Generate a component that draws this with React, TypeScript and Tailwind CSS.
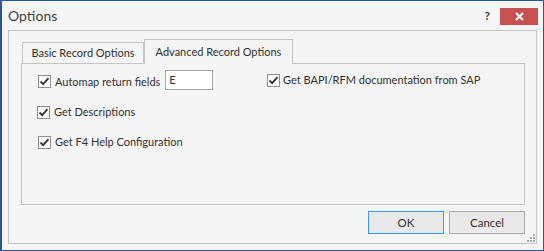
import React from "react";

function Check({ checked = true }: { checked?: boolean }) {
  return (
    <span className="flex h-[13px] w-[13px] shrink-0 items-center justify-center border border-[#8f8f8f] bg-white">
      {checked && (
        <svg width="11" height="11" viewBox="0 0 11 11">
          <path d="M1.5 5.5 L4.2 8.2 L9.5 2.2" fill="none" stroke="#333" strokeWidth="1.8" />
        </svg>
      )}
    </span>
  );
}

function Btn({ children, focused = false }: { children: React.ReactNode; focused?: boolean }) {
  return (
    <div
      className={
        focused
          ? "flex h-[23px] w-[76px] items-center justify-center border border-[#3399ff] bg-[#e9e9e9] text-[11.5px] text-[#333]"
          : "flex h-[23px] w-[76px] items-center justify-center border border-[#acacac] bg-[#e9e9e9] text-[11.5px] text-[#333]"
      }
    >
      {children}
    </div>
  );
}

export default function App() {
  return (
    <div
      className="flex h-[251px] w-[544px] flex-col border border-l-2 border-[#2b579a] bg-[#f5f5f5] text-[#333]"
      style={{ fontFamily: 'Lato, "Open Sans", sans-serif' }}
    >
      <div className="flex h-[29px] shrink-0 items-start">
        <div className="ml-[6px] mt-[5px] text-[14px] leading-[20px] text-[#444]">Options</div>
        <div className="ml-auto mt-[7px] flex items-start">
          <div className="mr-[10px] text-[12px] font-bold leading-[16px] text-[#444]">?</div>
          <div className="mr-[5px] flex h-[17px] w-[38px] items-center justify-center bg-[#c75050]">
            <svg width="9" height="9" viewBox="0 0 9 9">
              <path d="M1 1 L8 8 M8 1 L1 8" stroke="#fff" strokeWidth="2" />
            </svg>
          </div>
        </div>
      </div>
      <div className="relative mb-[6px] ml-[6px] mr-[6px] flex h-[214px] flex-col border border-[#c6c6c6]">
        <div className="ml-[12px] mr-[11px] mt-[8px] flex flex-col">
          <div className="flex h-[24px] items-end">
            <div className="relative ml-[1px] flex h-[21px] w-[122px] items-center justify-center border border-b-0 border-[#c6c6c6] text-[11px]">
              Basic Record Options
            </div>
            <div className="relative -mb-[1px] flex h-[25px] w-[149px] items-center justify-center border border-b-0 border-[#c6c6c6] bg-[#f5f5f5] text-[11px]">
              Advanced Record Options
            </div>
          </div>
          <div className="flex h-[142px] border border-[#c6c6c6] text-[11px]">
            <div className="ml-[16px] mt-[6px] flex flex-col">
              <div className="flex h-[20px] items-start">
                <span className="mt-[5px]">
                  <Check />
                </span>
                <span className="ml-[4px] mt-[4px] leading-[16px]">Automap return fields</span>
                <div className="ml-[5px] flex h-[20px] w-[48px] items-center border border-[#acacac] bg-white pl-[3px]">E</div>
              </div>
              <div className="-ml-[1px] mt-[16px] flex h-[13px] items-center">
                <Check />
                <span className="ml-[4px]">Get Descriptions</span>
              </div>
              <div className="mt-[17px] flex h-[13px] items-center">
                <Check />
                <span className="ml-[4px]">Get F4 Help Configuration</span>
              </div>
            </div>
            <div className="ml-auto mt-[10px] flex h-[13px] w-[257px] items-center">
              <Check />
              <span className="ml-[3px]">Get BAPI/RFM documentation from SAP</span>
            </div>
          </div>
          <div className="mt-[6px] flex justify-end gap-[5px]">
            <Btn focused>OK</Btn>
            <Btn>Cancel</Btn>
          </div>
        </div>
        <svg className="absolute bottom-[1px] right-[1px]" width="8" height="8" viewBox="0 0 8 8">
          <rect x="6" y="0" width="2" height="2" fill="#b0b0b0" />
          <rect x="3" y="3" width="2" height="2" fill="#b0b0b0" />
          <rect x="6" y="3" width="2" height="2" fill="#b0b0b0" />
          <rect x="0" y="6" width="2" height="2" fill="#b0b0b0" />
          <rect x="3" y="6" width="2" height="2" fill="#b0b0b0" />
          <rect x="6" y="6" width="2" height="2" fill="#b0b0b0" />
        </svg>
      </div>
    </div>
  );
}
